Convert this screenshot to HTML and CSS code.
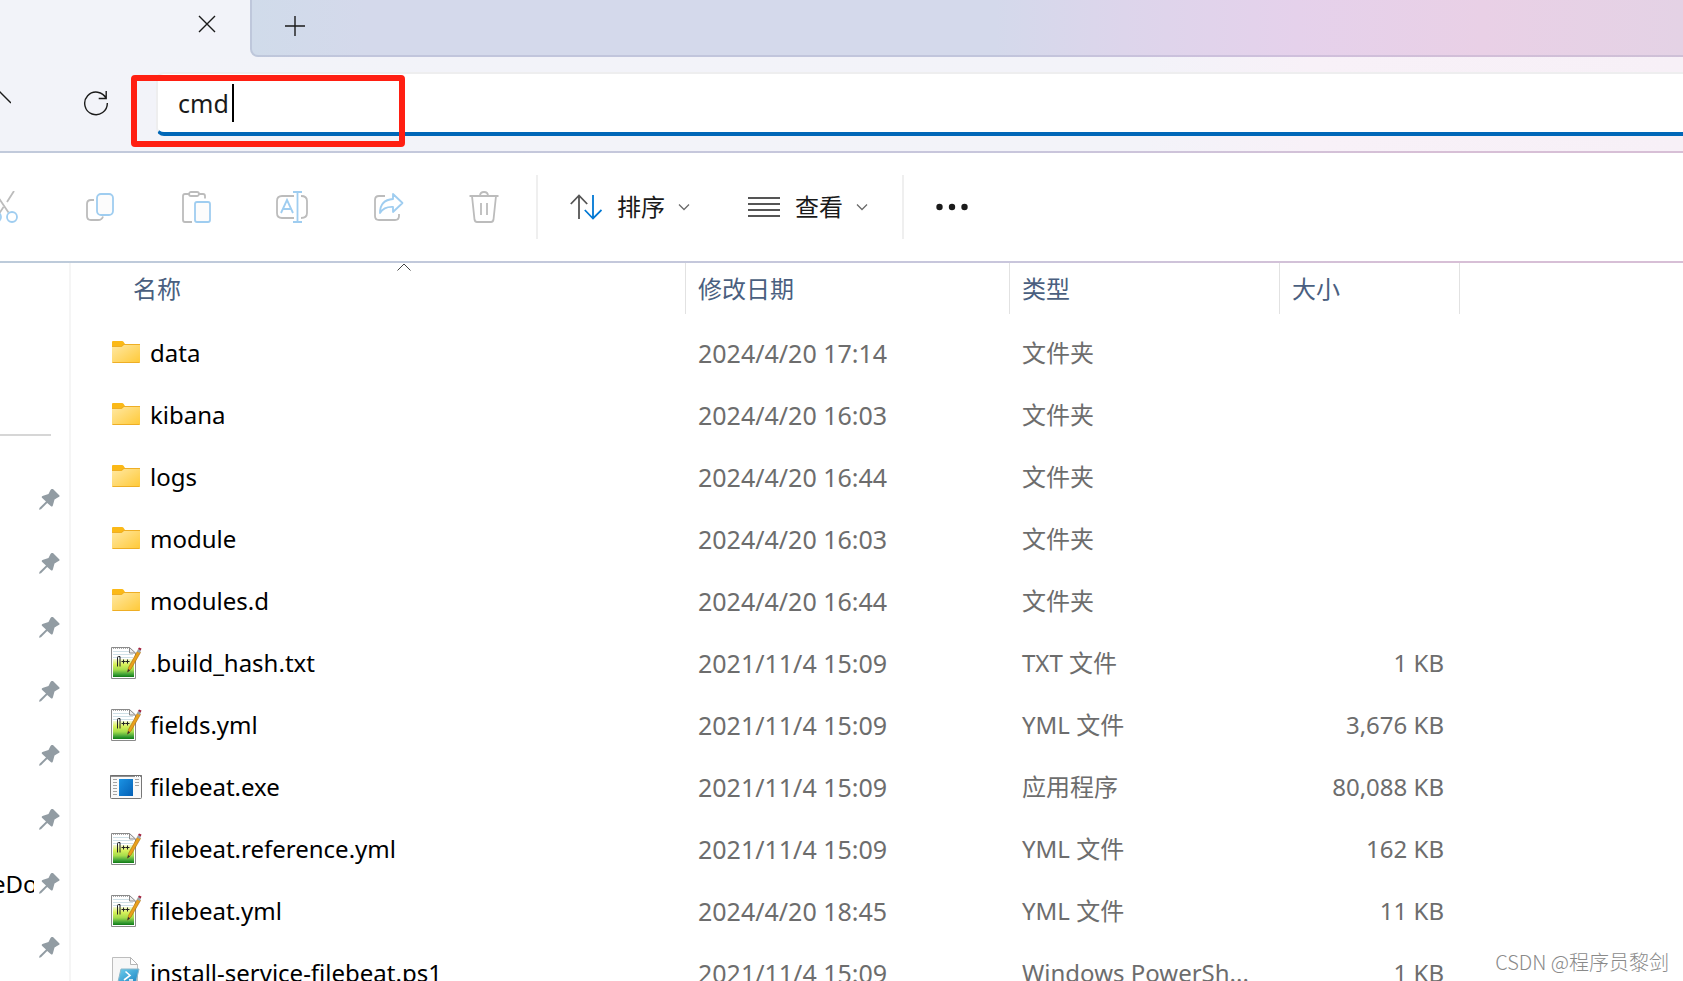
FILE: index.html
```
<!DOCTYPE html>
<html lang="zh-CN">
<head>
    <meta charset="UTF-8">
    <meta name="viewport" content="width=device-width, initial-scale=1.0">
    <title>filebeat</title>
    <link rel="stylesheet" href="styles.css">
</head>
<body>
    <!-- shared file icons -->
    <svg class="defs" width="0" height="0" aria-hidden="true">
        <defs>
            <linearGradient id="gFolder" x1="0" y1="0" x2="1" y2="1">
                <stop offset="0" stop-color="#ffe9a6"/><stop offset="1" stop-color="#ffc937"/>
            </linearGradient>
            <linearGradient id="gNote" x1="0" y1="0" x2="0" y2="1">
                <stop offset="0" stop-color="#f4f9d4"/><stop offset="0.3" stop-color="#d8f15a"/><stop offset="0.6" stop-color="#a4dc4c"/><stop offset="0.85" stop-color="#3fa238"/><stop offset="1" stop-color="#0f7a14"/>
            </linearGradient>
            <linearGradient id="gExe" x1="0" y1="0" x2="1" y2="1">
                <stop offset="0" stop-color="#1b93e4"/><stop offset="1" stop-color="#0560b5"/>
            </linearGradient>
            <linearGradient id="gPs" x1="0" y1="0" x2="1" y2="1">
                <stop offset="0" stop-color="#6fd0ee"/><stop offset="1" stop-color="#1780c0"/>
            </linearGradient>
        </defs>
        <symbol id="folder" viewBox="0 0 32 32">
            <path d="M2 5q0-1 1-1h9q1 0 1.500 .8L15 7v4H2z" fill="#fbb917"/>
            <path d="M2 10h9q1 0 1.600-.7L15 7h14q1 0 1 1v17q0 1-1 1H3q-1 0-1-1z" fill="url(#gFolder)"/>
            <path d="M2 9.500h8.500q1 0 1.700-.8l1.500-1.200H30M2.500 25.500h27" fill="none" stroke="#eeae25"/>
        </symbol>
        <symbol id="note" viewBox="0 0 32 32">
            <path d="M1.500 .5h18l6 6v25h-24z" fill="#fff" stroke="#8a8a8a"/>
            <path d="M3 1.500h16" stroke="#aaa" stroke-dasharray="1 1"/>
            <path d="M3 4.500h16M3 7.500h20M3 10.500h20" stroke="#cfe0e6"/>
            <rect x="3" y="12" width="21" height="18" fill="url(#gNote)"/>
            <path d="M19.500 .5v5.500h6z" fill="#eee" stroke="#8a8a8a"/>
            <path d="M7.500 19.500v-9q0-1 1-1h1.500v10M11.500 14.500h4M13.500 12.500v4M15.500 14.500h4M17.500 12.500v4" fill="none" stroke="#222"/>
            <path d="M17.500 25l1-4.500L27.500 4l3 1.500L21 22z" fill="#e9a11b" stroke="#a86a0c" stroke-width=".6"/>
            <path d="M17.300 25.500l.8-3.500 2 1.200z" fill="#333"/>
            <path d="M27 4.500l1-2.500 3 1.500-1.300 2.500z" fill="#9aa5ad"/>
            <path d="M28 2l1-1.500 2.500 1-.8 2z" fill="#a3223d"/>
        </symbol>
        <symbol id="exe" viewBox="0 0 32 32">
            <rect x=".5" y="4.500" width="31" height="23" rx="1" fill="#f9f9f9" stroke="#777"/>
            <path d="M0 5h32" stroke="#6b6b6b" stroke-width="1.500"/>
            <path d="M3 8.500h4M3 11.500h4M3 14.500h4M3 17.500h4M3 20.500h4M3 23.500h4M25 8.500h4M25 11.500h4M25 14.500h4" stroke="#a5a5a5"/>
            <path d="M25 5.500h5" stroke="#fff" stroke-dasharray="1 1"/>
            <rect x="9" y="8" width="14" height="17" fill="url(#gExe)"/>
        </symbol>
        <symbol id="ps" viewBox="0 0 32 32">
            <path d="M2.500 31.500V.5h18l7 7v24z" fill="#f7f7f7" stroke="#bdbdbd"/>
            <path d="M20.500 .5v7h7z" fill="#fff" stroke="#b5b5b5"/>
            <path d="M11 12h18l-3.500 15H7.500z" fill="url(#gPs)" stroke="#8db7c9"/>
            <path d="M15.500 14.500l4.500 4-6 4.500M19 23h4" fill="none" stroke="#fff" stroke-width="1.600"/>
        </symbol>
        <symbol id="pin" viewBox="0 0 21 21">
            <path d="M12.500 0q1-.5 2 .5l5.500 5.500q1.500 1.500-.8 2.300l-3.700 2.200-1.500 5.500q-.5 2.500-2.300 1L8.200 14 2 20.200 0 20.800l.6-2L7 12.600 3.200 9q-1.400-1.700 1-2.200l5.300-1.700 2-4z" fill="#929ca3"/>
        </symbol>
        <symbol id="down" viewBox="0 0 12 12">
            <path d="M1 3.500l5 5 5-5" fill="none" stroke="#6b6b6b" stroke-width="1.300"/>
        </symbol>
    </svg>

    <div class="window">
        <header class="tabs">
            <div class="tab">
                <button class="icon-btn" aria-label="关闭标签页">
                    <svg width="18" height="18" viewBox="0 0 18 18"><path d="M1 1l16 16M17 1L1 17" stroke="#1a1a1a" stroke-width="1.400"/></svg>
                </button>
            </div>
            <div class="strip">
                <button class="icon-btn" aria-label="新建标签页">
                    <svg width="20" height="20" viewBox="0 0 20 20"><path d="M10 0v20M0 10h20" stroke="#1a1a1a" stroke-width="1.400"/></svg>
                </button>
            </div>
        </header>

        <div class="nav">
            <button class="icon-btn up" aria-label="上移">
                <svg width="24" height="24" viewBox="0 0 24 24"><path d="M0 14L12 2l12 12M12 2v21" fill="none" stroke="#1a1a1a" stroke-width="1.400"/></svg>
            </button>
            <button class="icon-btn refresh" aria-label="刷新">
                <svg width="26" height="26" viewBox="0 0 26 26"><path d="M23.200 8.500A11.300 11.300 0 1 0 24.300 13M23.200 1v7.500h-7.500" fill="none" stroke="#1a1a1a" stroke-width="1.400"/></svg>
            </button>
            <div class="address">
                <input type="text" value="cmd" aria-label="地址">
                <span class="caret"></span>
            </div>
            <div class="mark"></div>
        </div>

        <div class="toolbar">
            <button class="tool" aria-label="剪切">
                <svg width="32" height="32" viewBox="0 0 32 32" fill="none" stroke-width="1.800"><path d="M6 0l14.500 21.500M26 0l-7 11M15.500 16l-4 6" stroke="#bcbcbc"/><circle cx="8" cy="26" r="5" stroke="#9fcdf0"/><circle cx="24" cy="26" r="5" stroke="#9fcdf0"/></svg>
            </button>
            <button class="tool" aria-label="复制">
                <svg width="32" height="32" viewBox="0 0 32 32" fill="none" stroke-width="1.800"><path d="M10 9H7q-4 0-4 4v12q0 4 4 4h7q4 0 5-3.500" stroke="#bcbcbc"/><rect x="13" y="3" width="16" height="21" rx="4" fill="#fcfcfc" stroke="#9fcdf0"/></svg>
            </button>
            <button class="tool" aria-label="粘贴">
                <svg width="32" height="32" viewBox="0 0 32 32" fill="none" stroke-width="1.800"><path d="M9 3H5Q3 3 3 5v24q0 2 2 2h7M19 3h4q2 0 2 2v2.500" stroke="#bcbcbc"/><rect x="9" y="1" width="10" height="4" rx="2" stroke="#bcbcbc"/><rect x="15" y="11" width="15" height="20" rx="2" fill="#fcfcfc" stroke="#9fcdf0"/></svg>
            </button>
            <button class="tool" aria-label="重命名">
                <svg width="32" height="32" viewBox="0 0 32 32" fill="none" stroke-width="1.800"><path d="M18 5H6Q1 5 1 10v12q0 5 5 5h12M25 5q6 0 6 5v12q0 5-6 5" stroke="#bcbcbc"/><path d="M17 1h9M17 31h9M21.500 1v30M5 22L11 9l6 13M7 18h8" stroke="#9fcdf0"/></svg>
            </button>
            <button class="tool" aria-label="共享">
                <svg width="32" height="32" viewBox="0 0 32 32" fill="none" stroke-width="1.800"><path d="M13 5H7Q3 5 3 9v16q0 4 4 4h16q4 0 4-4v-2" stroke="#bcbcbc"/><path d="M21 3l9.500 9-9.500 9v-5q-9-.5-13 6Q8 9 21 8z" stroke="#9fcdf0" stroke-linejoin="round"/></svg>
            </button>
            <button class="tool" aria-label="删除">
                <svg width="32" height="32" viewBox="0 0 32 32" fill="none" stroke="#bcbcbc" stroke-width="1.800"><path d="M1.500 5h29M12 5q0-4 4-4t4 4M4 5l2.500 23.500Q7 31 9 31h14q2 0 2.500-2.500L28 5M13 12v12M19 12v12"/></svg>
            </button>
            <span class="divider"></span>
            <button class="menu">
                <svg width="32" height="26" viewBox="0 0 32 26" fill="none" stroke-width="1.800"><path d="M9 25V1.500M.8 10L9 1.500l8.200 8.500" stroke="#555"/><path d="M23 1v23.500M14.800 16L23 24.500l8.500-8.500" stroke="#0078d4"/></svg>
                <span>排序</span>
                <svg width="12" height="12"><use href="#down"/></svg>
            </button>
            <button class="menu">
                <svg width="32" height="20" viewBox="0 0 32 20"><path d="M0 1h32M0 7h32M0 13h32M0 19h32" stroke="#555" stroke-width="2"/></svg>
                <span>查看</span>
                <svg width="12" height="12"><use href="#down"/></svg>
            </button>
            <span class="divider"></span>
            <button class="more" aria-label="更多">
                <svg width="32" height="8" viewBox="0 0 32 8" fill="#1a1a1a"><circle cx="3.500" cy="4" r="3.200"/><circle cx="16" cy="4" r="3.200"/><circle cx="28.500" cy="4" r="3.200"/></svg>
            </button>
        </div>

        <main class="content">
            <aside class="sidebar">
                <ul>
                    <li><svg width="21" height="21"><use href="#pin"/></svg></li>
                    <li><svg width="21" height="21"><use href="#pin"/></svg></li>
                    <li><svg width="21" height="21"><use href="#pin"/></svg></li>
                    <li><svg width="21" height="21"><use href="#pin"/></svg></li>
                    <li><svg width="21" height="21"><use href="#pin"/></svg></li>
                    <li><svg width="21" height="21"><use href="#pin"/></svg></li>
                    <li><span>eDo</span><svg width="21" height="21"><use href="#pin"/></svg></li>
                    <li><svg width="21" height="21"><use href="#pin"/></svg></li>
                </ul>
            </aside>
            <div class="files">
                <table>
                    <colgroup>
                        <col class="c-name"><col class="c-date"><col class="c-type"><col class="c-size">
                    </colgroup>
                    <thead>
                        <tr>
                            <th><div>名称<svg class="sorted" width="14" height="8" viewBox="0 0 14 8"><path d="M.5 7.500L7 1l6.500 6.500" fill="none" stroke="#444"/></svg></div></th>
                            <th><div>修改日期</div></th>
                            <th><div>类型</div></th>
                            <th><div>大小</div></th>
                        </tr>
                    </thead>
                    <tbody>
                        <tr><td><div class="name"><svg><use href="#folder"/></svg>data</div></td><td>2024/4/20 17:14</td><td>文件夹</td><td></td></tr>
                        <tr><td><div class="name"><svg><use href="#folder"/></svg>kibana</div></td><td>2024/4/20 16:03</td><td>文件夹</td><td></td></tr>
                        <tr><td><div class="name"><svg><use href="#folder"/></svg>logs</div></td><td>2024/4/20 16:44</td><td>文件夹</td><td></td></tr>
                        <tr><td><div class="name"><svg><use href="#folder"/></svg>module</div></td><td>2024/4/20 16:03</td><td>文件夹</td><td></td></tr>
                        <tr><td><div class="name"><svg><use href="#folder"/></svg>modules.d</div></td><td>2024/4/20 16:44</td><td>文件夹</td><td></td></tr>
                        <tr><td><div class="name"><svg><use href="#note"/></svg>.build_hash.txt</div></td><td>2021/11/4 15:09</td><td>TXT 文件</td><td>1 KB</td></tr>
                        <tr><td><div class="name"><svg><use href="#note"/></svg>fields.yml</div></td><td>2021/11/4 15:09</td><td>YML 文件</td><td>3,676 KB</td></tr>
                        <tr><td><div class="name"><svg><use href="#exe"/></svg>filebeat.exe</div></td><td>2021/11/4 15:09</td><td>应用程序</td><td>80,088 KB</td></tr>
                        <tr><td><div class="name"><svg><use href="#note"/></svg>filebeat.reference.yml</div></td><td>2021/11/4 15:09</td><td>YML 文件</td><td>162 KB</td></tr>
                        <tr><td><div class="name"><svg><use href="#note"/></svg>filebeat.yml</div></td><td>2024/4/20 18:45</td><td>YML 文件</td><td>11 KB</td></tr>
                        <tr><td><div class="name"><svg><use href="#ps"/></svg>install-service-filebeat.ps1</div></td><td>2021/11/4 15:09</td><td>Windows PowerSh...</td><td>1 KB</td></tr>
                    </tbody>
                </table>
            </div>
        </main>
        <div class="watermark">CSDN @程序员黎剑</div>
    </div>
</body>
</html>
```
FILE: styles.css
```
* { box-sizing: border-box; }
body { margin: 0; font-family: "Noto Sans", "Noto Sans CJK SC", sans-serif; font-size: 24px; color: #000; background: #fff; }
button { border: 0; padding: 0; background: none; font: inherit; color: inherit; cursor: pointer; }
svg { display: block; flex: none; }
.defs { position: absolute; }
.window { position: relative; height: 100vh; overflow: hidden; display: flex; flex-direction: column; }

/* tabs */
.tabs { display: flex; flex: none; height: 57px; background: #f2f3f9; }
.tab { width: 250px; padding: 15px 34px 0 0; display: flex; justify-content: flex-end; align-items: flex-start; }
.strip { flex: 1; padding: 16px 0 0 33px; display: flex; align-items: flex-start; border-left: 2px solid rgba(120, 120, 160, 0.2); border-bottom: 2px solid rgba(120, 120, 160, 0.2); border-bottom-left-radius: 8px;
    background: linear-gradient(90deg, #d0dbea 0, #d4d9eb 8%, #d4d9eb 52%, #ddd5eb 61%, #e5d1eb 73%, #e9d0e6 86%, #e4d2e5 100%) border-box; }
.icon-btn { display: flex; }

/* address bar */
.nav { position: relative; flex: none; display: flex; align-items: flex-start; height: 96px; padding-top: 15px; border-bottom: 2px solid #c3cbdd; border-image: linear-gradient(90deg, #c1cadb 0, #c8c6dc 60%, #d7bfd6 85%, #d7bfd6 100%) 1; background: linear-gradient(90deg, #f2f3f9 0, #f3f3f9 68%, #f8f1f8 78%, #f7f0f7 100%); }
.up { margin: 17px 0 0 -13px; }
.refresh { margin: 18px 47px 0 72px; }
.address { position: relative; flex: 1; height: 64px; background: #fff; border: 2px solid #eeeeef; border-right: 0; border-bottom: 4px solid #0067b8; border-radius: 8px 0 0 8px; }
.address input { width: 100%; height: 58px; padding: 0 20px; border: 0; outline: 0; background: none; font: inherit; font-size: 25px; color: #1a1a1a; }
.caret { position: absolute; left: 74px; top: 10px; width: 2px; height: 38px; background: #000; }
.mark { position: absolute; left: 131px; top: 18px; width: 274px; height: 72px; border: 6px solid #ff1f12; border-radius: 4px; }

/* toolbar */
.toolbar { flex: none; display: flex; align-items: center; height: 110px; margin-left: -44px; color: #1a1a1a; border-bottom: 2px solid #c3cbdd; border-image: linear-gradient(90deg, #bccbda 0, #c8c6dc 60%, #d7bfd6 85%, #d7bfd6 100%) 1; }
.tool { width: 96px; height: 64px; display: flex; align-items: center; justify-content: center; }
.divider { width: 2px; height: 64px; margin: 0 4px; background: #efefef; }
.menu { display: flex; align-items: center; height: 64px; padding: 0 30px 0 28px; }
.menu span { line-height: 32px; margin: 0 13px 0 15px; }
.more { padding: 0 28px; }

/* content */
.content { flex: 1; display: flex; min-height: 0; }
.sidebar { width: 71px; flex: none; padding-top: 171px; border-right: 2px solid #f5f5f5; }
.sidebar ul { margin: 0; padding: 33px 9px 0 0; list-style: none; position: relative; }
.sidebar ul::before { content: ""; position: absolute; top: 0; left: 0; width: 51px; height: 2px; background: #d6d6d6; }
.sidebar li { display: flex; align-items: center; justify-content: flex-end; gap: 5px; height: 64px; margin-left: -8px; }
.sidebar span { width: 42px; overflow: hidden; }
.files { flex: 1; min-width: 0; }
table { table-layout: fixed; width: 1389px; border-collapse: collapse; }
.c-name { width: 615px; }
.c-date { width: 324px; }
.c-type { width: 270px; }
.c-size { width: 180px; }
th { height: 59px; padding: 0; vertical-align: top; text-align: left; font-weight: normal; color: #4a5f80; }
th div { position: relative; height: 51px; line-height: 52px; padding-left: 12px; border-right: 1px solid #e2e2e2; }
th:first-child div { padding-left: 62px; }
.sorted { position: absolute; left: 326px; top: 0; }
td { height: 62px; padding: 0 0 0 12px; line-height: 32px; white-space: nowrap; color: #6d6d6d; }
td:first-child { padding-left: 39px; color: #000; }
td:last-child { padding-right: 16px; text-align: right; }
td:nth-child(2) { font-size: 25px; }
.name { display: flex; align-items: center; gap: 8px; }
.name svg { width: 32px; height: 32px; }

.watermark { position: absolute; right: 14px; bottom: 5px; font-family: "Noto Sans CJK SC", sans-serif; font-size: 20px; font-weight: 300; color: #8a8a8a; text-shadow: 1px 1px 1px #fff; }
```
